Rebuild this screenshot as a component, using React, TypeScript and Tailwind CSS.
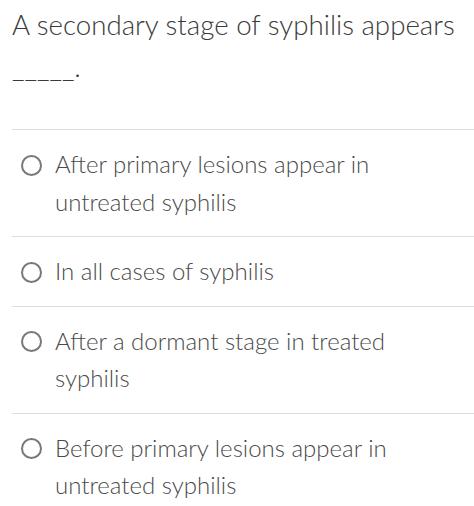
import React from "react";

const OPTIONS = [
  "After primary lesions appear in untreated syphilis",
  "In all cases of syphilis",
  "After a dormant stage in treated syphilis",
  "Before primary lesions appear in untreated syphilis",
];

export default function App() {
  return (
    <div className="min-h-screen bg-white pl-3 font-['Lato',sans-serif]">
      {/* Question */}
      <div className="pt-1 pb-[41px] pr-3">
        <h1 className="text-[27.7px] leading-[42px] font-light text-[#3a3a3a]">
          A secondary stage of syphilis appears
          <br />
          _____.
        </h1>
      </div>

      {/* Answers */}
      <div>
        {OPTIONS.map((opt) => (
          <div key={opt} className="border-t border-[#dedede] pt-[15px] pb-[16px] pr-3 flex items-start">
            <span className="mt-[9.5px] ml-[8.5px] mr-[13.5px] w-[21px] h-[21px] shrink-0 rounded-full border-2 border-[#787878]" />
            <span className="max-w-[390px] text-[24px] leading-[37.5px] font-light text-[#4a4a4a]">{opt}</span>
          </div>
        ))}
      </div>
    </div>
  );
}
